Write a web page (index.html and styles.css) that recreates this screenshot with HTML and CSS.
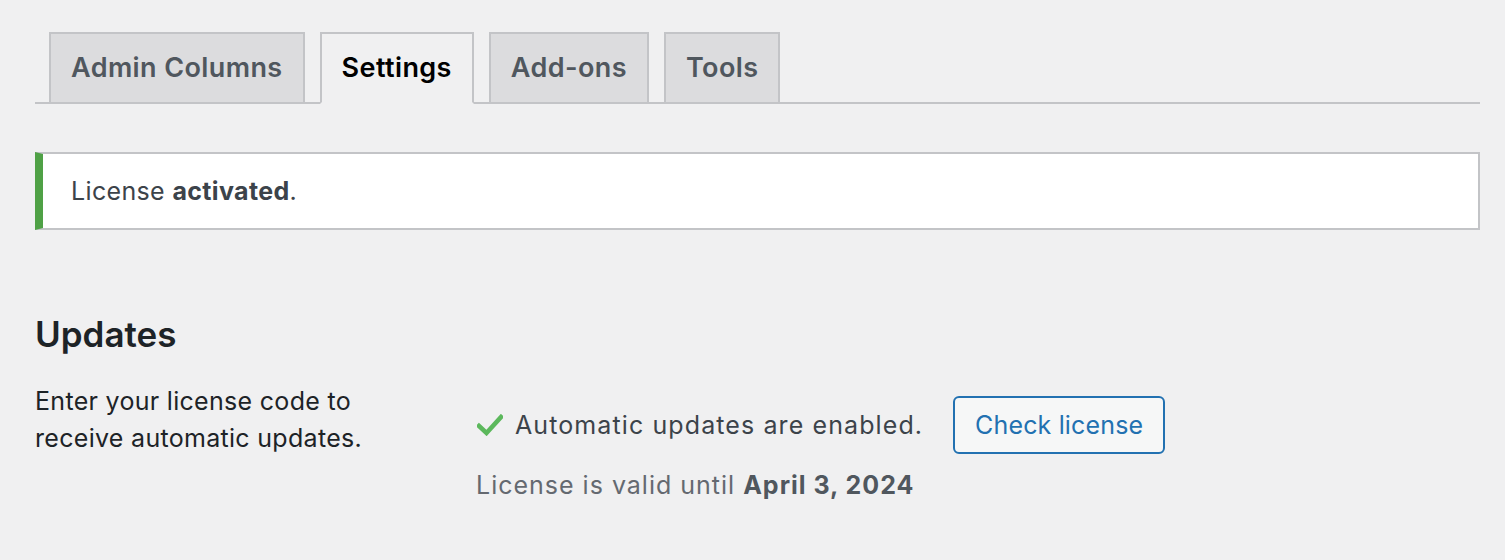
FILE: index.html
```html
<!DOCTYPE html>
<html lang="en">

<head>
    <meta charset="UTF-8" />
    <meta name="viewport" content="width=device-width, initial-scale=1.0" />
    <title>Admin Columns Settings</title>
    <link rel="stylesheet" href="styles.css">
</head>

<body>

    <div class="wrap">
        <nav class="nav-tabs">
            <a class="nav-tab" href="#">Admin Columns</a>
            <a class="nav-tab active" href="#">Settings</a>
            <a class="nav-tab" href="#">Add-ons</a>
            <a class="nav-tab" href="#">Tools</a>
        </nav>

        <div class="notice">
            <p>License <strong>activated</strong>.</p>
        </div>

        <h2 class="section-title">Updates</h2>

        <div class="settings-row">
            <div class="settings-desc">
                Enter your license code to<br>receive automatic updates.
            </div>
            <div class="settings-field">
                <div class="status-line">
                    <svg class="check" viewBox="0 0 26 22" width="26" height="22">
                        <polyline points="2,12 9.5,19 24,3" fill="none" stroke="#5cb85c" stroke-width="4.5" stroke-linecap="square" />
                    </svg>
                    <span class="status-text">Automatic updates are enabled.</span>
                    <button class="button">Check license</button>
                </div>
                <p class="expiry">License is valid until <strong>April 3, 2024</strong></p>
            </div>
        </div>
    </div>

</body>

</html>
```

FILE: styles.css
```css
body {
    margin: 0;
    padding: 0;
    background-color: #f0f0f1;
    font-family: Inter, "Noto Sans", sans-serif;
    color: #3c434a;
}

.wrap {
    padding: 32px 25px 0 35px;
}

.nav-tabs {
    display: flex;
    gap: 15px;
    padding-left: 14px;
    border-bottom: 2px solid #c3c4c7;
}

.nav-tab {
    display: block;
    margin-bottom: -2px;
    padding: 10px 20px;
    font-size: 27px;
    font-weight: 600;
    line-height: 48px;
    letter-spacing: 0.4px;
    color: #50575e;
    text-decoration: none;
    background: #dcdcde;
    border: 2px solid #c3c4c7;
}

.nav-tab.active {
    color: #000;
    background: #f0f0f1;
    border-bottom-color: #f0f0f1;
}

.notice {
    margin-top: 48px;
    background: #fff;
    border: 2px solid #c3c4c7;
    border-left: 8px solid #4fa146;
    padding: 2px 24px;
}

.notice p {
    margin: 12px 0;
    padding: 4px;
    font-size: 25px;
    line-height: 38px;
    letter-spacing: 0.35px;
}

.section-title {
    margin: 82px 0 0;
    font-size: 35px;
    font-weight: 600;
    line-height: 44px;
    color: #1d2327;
}

.settings-row {
    display: flex;
    margin-top: 27px;
}

.settings-desc {
    width: 441px;
    font-size: 25px;
    line-height: 37px;
    letter-spacing: 0.3px;
    color: #1d2327;
}

.settings-field {
    padding-top: 13px;
}

.status-line {
    display: flex;
    align-items: center;
}

.check {
    margin-left: 1px;
    margin-right: 12px;
}

.status-text {
    font-size: 25px;
    letter-spacing: 1.1px;
    color: #3c434a;
}

.button {
    margin-left: 30px;
    padding: 0 20px;
    height: 58px;
    font-family: inherit;
    font-size: 25px;
    letter-spacing: 0.15px;
    color: #2271b1;
    background: #f6f7f7;
    border: 2px solid #2271b1;
    border-radius: 6px;
    cursor: pointer;
}

.expiry {
    margin: 13px 0 0;
    font-size: 25px;
    line-height: 37px;
    letter-spacing: 1px;
    color: #646970;
}

.expiry strong {
    color: #50575e;
}
```
